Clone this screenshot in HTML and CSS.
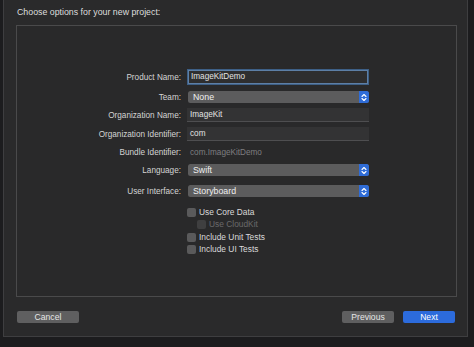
FILE: index.html
```html
<!DOCTYPE html>
<html>
<head>
<meta charset="utf-8">
<link rel="stylesheet" href="styles.css">
</head>
<body>
<div class="window">
  <div class="title">Choose options for your new project:</div>
  <div class="panel">
    <div class="form">
      <div class="row r1">
        <div class="label">Product Name:</div>
        <div class="field focus">ImageKitDemo</div>
      </div>
      <div class="row r2">
        <div class="label">Team:</div>
        <div class="popup"><span>None</span><span class="arrows"><svg width="6" height="9" viewBox="0 0 6 9"><polyline points="1,3.5 3,1.5 5,3.5" /><polyline points="1,5.5 3,7.5 5,5.5" /></svg></span></div>
      </div>
      <div class="row r3">
        <div class="label">Organization Name:</div>
        <div class="field">ImageKit</div>
      </div>
      <div class="row r4">
        <div class="label">Organization Identifier:</div>
        <div class="field">com</div>
      </div>
      <div class="row r5">
        <div class="label">Bundle Identifier:</div>
        <div class="static">com.ImageKitDemo</div>
      </div>
      <div class="row r6">
        <div class="label">Language:</div>
        <div class="popup"><span>Swift</span><span class="arrows"><svg width="6" height="9" viewBox="0 0 6 9"><polyline points="1,3.5 3,1.5 5,3.5" /><polyline points="1,5.5 3,7.5 5,5.5" /></svg></span></div>
      </div>
      <div class="row r7">
        <div class="label">User Interface:</div>
        <div class="popup"><span>Storyboard</span><span class="arrows"><svg width="6" height="9" viewBox="0 0 6 9"><polyline points="1,3.5 3,1.5 5,3.5" /><polyline points="1,5.5 3,7.5 5,5.5" /></svg></span></div>
      </div>
      <div class="row c1">
        <div class="label"></div>
        <div class="check"><span class="box"></span>Use Core Data</div>
      </div>
      <div class="row c2">
        <div class="label"></div>
        <div class="check sub disabled"><span class="box"></span>Use CloudKit</div>
      </div>
      <div class="row c3">
        <div class="label"></div>
        <div class="check"><span class="box"></span>Include Unit Tests</div>
      </div>
      <div class="row c4">
        <div class="label"></div>
        <div class="check"><span class="box"></span>Include UI Tests</div>
      </div>
    </div>
  </div>
  <div class="buttons">
    <div class="btn cancel">Cancel</div>
    <div class="spacer"></div>
    <div class="btn prev">Previous</div>
    <div class="btn next">Next</div>
  </div>
</div>
</body>
</html>
```
FILE: styles.css
```css
html, body {
  margin: 0;
  padding: 0;
  background: #1c1c1e;
  font-family: "Liberation Sans", Arial, sans-serif;
  color: #dcdcdc;
}
.window {
  box-sizing: border-box;
  width: 465px;
  height: 337px;
  margin-left: 3px;
  background: #2a2a2b;
  border: 1px solid #3e3e40;
  border-top: none;
  display: flex;
  flex-direction: column;
}
.title {
  font-size: 8.8px;
  line-height: 12px;
  padding: 6px 0 0 13px;
  color: #dedede;
}
.panel {
  box-sizing: border-box;
  margin: 7px 10px 0 12px;
  height: 272px;
  border: 1px solid #4a4a4b;
  background: #29292a;
  padding-top: 43px;
}
.form {
  display: flex;
  flex-direction: column;
}
.row {
  display: flex;
  align-items: center;
  height: 12px;
}
.label {
  width: 164px;
  margin-right: 6px;
  text-align: right;
  font-size: 8.2px;
  color: #d4d4d4;
  white-space: nowrap;
}
.r1 { height: 16px; }
.r2 { margin-top: 6px; }
.r3 { margin-top: 5px; height: 14px; }
.r4 { margin-top: 5px; height: 14px; }
.r5 { margin-top: 5px; }
.r6 { margin-top: 6px; }
.r7 { margin-top: 9px; }
.c1 { margin-top: 9px; }
.c2 { margin-top: 0; }
.c3 { margin-top: 1px; }
.c4 { margin-top: 0; }

.field {
  box-sizing: border-box;
  width: 182px;
  height: 14px;
  background: #333334;
  border-bottom: 1px solid #4e4e50;
  font-size: 8.2px;
  line-height: 13px;
  padding-left: 3px;
  color: #e2e2e2;
}
.field.focus {
  width: 180px;
  height: 14px;
  margin-left: 1px;
  border: 1px solid #5d7fa6;
  box-shadow: 0 0 0 1px #3d5f86;
  background: #2e2e2f;
  line-height: 12px;
  padding-left: 2px;
}
.static {
  font-size: 8.2px;
  color: #7e7e80;
  padding-left: 3px;
}
.popup {
  box-sizing: border-box;
  width: 181px;
  height: 12px;
  margin-left: 1px;
  border-radius: 2.5px;
  background: #5c5c5d;
  display: flex;
  align-items: center;
  justify-content: space-between;
  font-size: 8.8px;
  color: #efefef;
  padding-left: 5px;
  overflow: hidden;
}
.arrows {
  width: 10px;
  height: 12px;
  background: #2f6cd6;
  display: flex;
  align-items: center;
  justify-content: center;
}
.arrows svg polyline {
  fill: none;
  stroke: #ffffff;
  stroke-width: 1.1;
  stroke-linecap: round;
  stroke-linejoin: round;
}
.check {
  display: flex;
  align-items: center;
  font-size: 8.4px;
  color: #dadada;
}
.box {
  width: 9px;
  height: 9px;
  border-radius: 2px;
  background: #5a5a5b;
  margin-right: 3px;
}
.check.sub { margin-left: 10px; }
.check.disabled { color: #69696a; }
.check.disabled .box { background: #3f3f40; }

.buttons {
  display: flex;
  margin-top: 14px;
  padding: 0 12px 0 13px;
}
.spacer { flex: 1; }
.btn {
  height: 12px;
  border-radius: 2px;
  font-size: 8.6px;
  line-height: 12px;
  text-align: center;
  color: #e6e6e6;
  background: #5f5f60;
}
.cancel { width: 62px; }
.prev { width: 52px; }
.next {
  width: 52px;
  margin-left: 9px;
  background: #2c6bdc;
  color: #ffffff;
}
```
